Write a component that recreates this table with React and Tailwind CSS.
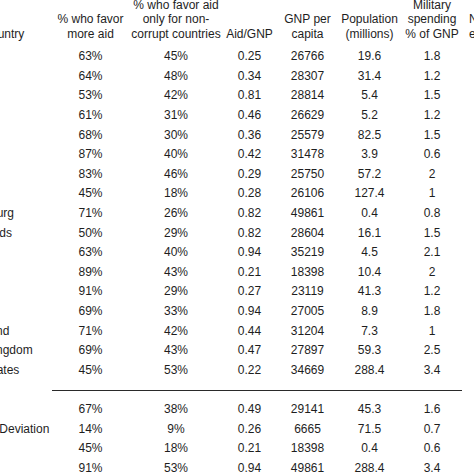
const cols = 'grid grid-cols-[104.7px_77px_94px_53px_63px_61px_64px_100px]';

const countries = [
  ['Australia', '63%', '45%', '0.25', '26766', '19.6', '1.8'],
  ['Canada', '64%', '48%', '0.34', '28307', '31.4', '1.2'],
  ['Denmark', '53%', '42%', '0.81', '28814', '5.4', '1.5'],
  ['Finland', '61%', '31%', '0.46', '26629', '5.2', '1.2'],
  ['Germany', '68%', '30%', '0.36', '25579', '82.5', '1.5'],
  ['Ireland', '87%', '40%', '0.42', '31478', '3.9', '0.6'],
  ['Italy', '83%', '46%', '0.29', '25750', '57.2', '2'],
  ['Japan', '45%', '18%', '0.28', '26106', '127.4', '1'],
  ['Luxembourg', '71%', '26%', '0.82', '49861', '0.4', '0.8'],
  ['Netherlands', '50%', '29%', '0.82', '28604', '16.1', '1.5'],
  ['Norway', '63%', '40%', '0.94', '35219', '4.5', '2.1'],
  ['Portugal', '89%', '43%', '0.21', '18398', '10.4', '2'],
  ['Spain', '91%', '29%', '0.27', '23119', '41.3', '1.2'],
  ['Sweden', '69%', '33%', '0.94', '27005', '8.9', '1.8'],
  ['Switzerland', '71%', '42%', '0.44', '31204', '7.3', '1'],
  ['United Kingdom', '69%', '43%', '0.47', '27897', '59.3', '2.5'],
  ['United States', '45%', '53%', '0.22', '34669', '288.4', '3.4'],
];

const summary = [
  ['Mean', '67%', '38%', '0.49', '29141', '45.3', '1.6'],
  ['Standard Deviation', '14%', '9%', '0.26', '6665', '71.5', '0.7'],
  ['Minimum', '45%', '18%', '0.21', '18398', '0.4', '0.6'],
  ['Maximum', '91%', '53%', '0.94', '49861', '288.4', '3.4'],
];

const Row = ({ cells }) => (
  <div className={`${cols} leading-[19.6px] h-[19.6px]`}>
    <div className="text-left whitespace-nowrap">{cells[0]}</div>
    {cells.slice(1).map((c, i) => (
      <div key={i} className="text-center whitespace-nowrap">{c}</div>
    ))}
    <div />
  </div>
);

export default function App() {
  return (
    <div className="w-[474px] h-[474px] overflow-hidden bg-white text-[#1e1e1e] text-[12px] font-['Liberation_Sans',Arial,sans-serif]">
      <div className="ml-[-52.7px] mt-[-2.1px] w-[680px]">
        {/* header */}
        <div className={`${cols} leading-[14.5px] h-[43.5px] items-end`}>
          <div className="pl-[35px] whitespace-nowrap">Country</div>
          <div className="text-center whitespace-nowrap">% who favor<br />more aid</div>
          <div className="text-center whitespace-nowrap">% who favor aid<br />only for non-<br />corrupt countries</div>
          <div className="text-center whitespace-nowrap">Aid/GNP</div>
          <div className="text-center whitespace-nowrap">GNP per<br />capita</div>
          <div className="text-center whitespace-nowrap">Population<br />(millions)</div>
          <div className="text-center whitespace-nowrap">Military<br />spending<br />% of GNP</div>
          <div className="pl-[5px] whitespace-nowrap">Number of<br />embassies</div>
        </div>

        <div className="mt-[5.9px]">
          {countries.map((r) => (
            <Row key={r[0]} cells={r} />
          ))}
        </div>

        <div className="ml-[104.7px] w-[410px] h-[1.5px] bg-[#2a2a2a] mt-[9.5px] mb-[8.8px]" />

        <div>
          {summary.map((r) => (
            <Row key={r[0]} cells={r} />
          ))}
        </div>
      </div>
    </div>
  );
}
